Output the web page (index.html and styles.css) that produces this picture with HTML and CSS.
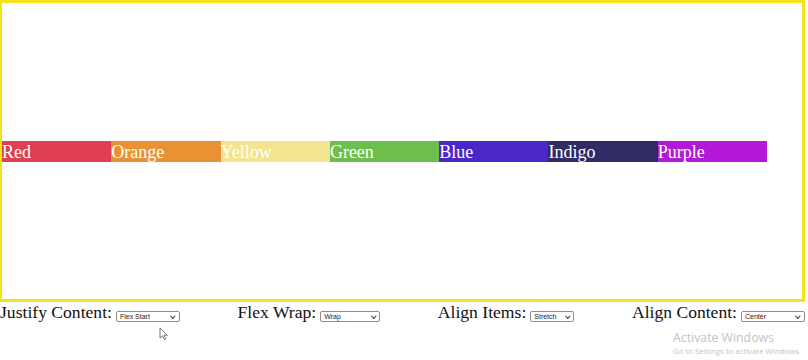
FILE: index.html
```html
<!DOCTYPE html>
<html>
<head>
<meta charset="utf-8">
<link rel="stylesheet" href="styles.css">
</head>
<body>
<div class="stage">
  <div class="bar red">Red</div>
  <div class="bar orange">Orange</div>
  <div class="bar yellow">Yellow</div>
  <div class="bar green">Green</div>
  <div class="bar blue">Blue</div>
  <div class="bar indigo">Indigo</div>
  <div class="bar purple">Purple</div>
</div>
<div class="controls">
  <div class="group"><span class="label">Justify Content:</span>
    <span class="selwrap"><select class="sel w64"><option>Flex Start</option></select><span class="chev"></span></span></div>
  <div class="group"><span class="label">Flex Wrap:</span>
    <span class="selwrap"><select class="sel w60"><option>Wrap</option></select><span class="chev"></span></span></div>
  <div class="group"><span class="label">Align Items:</span>
    <span class="selwrap"><select class="sel w44"><option>Stretch</option></select><span class="chev"></span></span></div>
  <div class="group"><span class="label">Align Content:</span>
    <span class="selwrap"><select class="sel w64"><option>Center</option></select><span class="chev"></span></span></div>
</div>
<svg class="cursor" width="10" height="14" viewBox="0 0 10 14"><path d="M1 1 L1 11 L3.5 8.8 L5.3 12.6 L6.8 11.9 L5 8.2 L8.4 8.2 Z" fill="#fff" stroke="#555" stroke-width="0.8" stroke-linejoin="round"/></svg>
<div class="watermark">
  <div class="wm-title">Activate Windows</div>
  <div class="wm-sub">Go to Settings to activate Windows.</div>
</div>
</body>
</html>
```
FILE: styles.css
```css
html, body {
  margin: 0;
  padding: 0;
  background: #fff;
}
body {
  font-family: "Liberation Serif", "Times New Roman", serif;
  width: 808px;
  height: 360px;
  overflow: hidden;
  position: relative;
}
.stage {
  box-sizing: border-box;
  width: 805px;
  height: 302px;
  border: 3px solid #f6e11c;
  border-left-width: 2px;
  display: flex;
  flex-wrap: wrap;
  align-content: center;
}
.bar {
  width: 109.3px;
  height: 21px;
  line-height: 22px;
  font-size: 18px;
  color: #fff;
  white-space: nowrap;
}
.red { background: #e03f4f; }
.orange { background: #e99234; }
.yellow { background: #f3e48f; }
.green { background: #6dbe4c; }
.blue { background: #4b26c8; }
.indigo { background: #2f2b64; }
.purple { background: #b318d7; }

.controls {
  width: 805px;
  display: flex;
  justify-content: space-between;
  align-items: baseline;
}
.group {
  display: flex;
  align-items: baseline;
  gap: 4px;
}
.label {
  font-size: 17.6px;
  color: #111;
  line-height: 21px;
}
.selwrap {
  position: relative;
  display: inline-block;
  top: 1px;
}
.sel {
  -webkit-appearance: none;
  appearance: none;
  box-sizing: border-box;
  font-family: "Liberation Sans", Arial, sans-serif;
  font-size: 7px;
  height: 11px;
  line-height: 9px;
  padding: 0 0 0 3px;
  margin: 0;
  border: 1px solid #8d8d8d;
  border-radius: 2px;
  background: #fff;
  color: #222;
  display: block;
}
.chev {
  position: absolute;
  right: 5px;
  top: 2.5px;
  width: 2.6px;
  height: 2.6px;
  border-right: 1.2px solid #333;
  border-bottom: 1.2px solid #333;
  transform: rotate(45deg);
}
.w64 { width: 64px; }
.w60 { width: 60px; }
.w44 { width: 44px; }

.cursor {
  position: absolute;
  left: 159px;
  top: 327px;
}
.watermark {
  position: absolute;
  left: 673px;
  top: 330px;
  font-family: "Open Sans", "DejaVu Sans", sans-serif;
  color: #c4c4c4;
}
.wm-title {
  font-size: 12.3px;
  line-height: 16px;
}
.wm-sub {
  font-size: 7.8px;
  line-height: 11px;
}
```
